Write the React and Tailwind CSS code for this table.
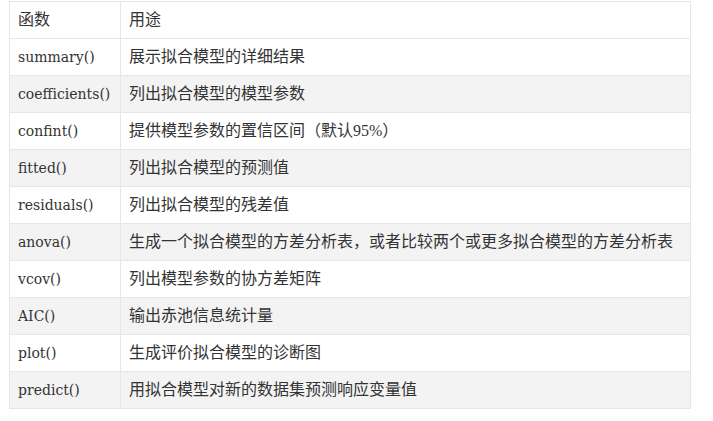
const rows = [
  ['summary()', '展示拟合模型的详细结果'],
  ['coefficients()', '列出拟合模型的模型参数'],
  ['confint()', '提供模型参数的置信区间（默认95%）'],
  ['fitted()', '列出拟合模型的预测值'],
  ['residuals()', '列出拟合模型的残差值'],
  ['anova()', '生成一个拟合模型的方差分析表，或者比较两个或更多拟合模型的方差分析表'],
  ['vcov()', '列出模型参数的协方差矩阵'],
  ['AIC()', '输出赤池信息统计量'],
  ['plot()', '生成评价拟合模型的诊断图'],
  ['predict()', '用拟合模型对新的数据集预测响应变量值'],
];

export default function App() {
  return (
    <div className="w-[713px] h-[421px] bg-white pt-px pl-[9px] text-[#333] text-[16px] font-['Liberation_Serif','Noto_Sans_CJK_SC',serif]">
      <table className="w-[682px] table-fixed border-collapse">
        <thead>
          <tr className="h-[37px]">
            <th className="w-[111px] border border-[#e6e6e6] px-2 text-left font-normal">函数</th>
            <th className="border border-[#e6e6e6] px-2 text-left font-normal">用途</th>
          </tr>
        </thead>
        <tbody>
          {rows.map(([fn, desc], i) => (
            <tr key={fn} className={i % 2 === 1 ? 'h-[37px] bg-[#f3f3f3]' : 'h-[37px]'}>
              <td className="border border-[#e6e6e6] px-2 whitespace-nowrap text-[14px] font-['DejaVu_Serif',serif]">{fn}</td>
              <td className="border border-[#e6e6e6] px-2 whitespace-nowrap">{desc}</td>
            </tr>
          ))}
        </tbody>
      </table>
    </div>
  );
}
